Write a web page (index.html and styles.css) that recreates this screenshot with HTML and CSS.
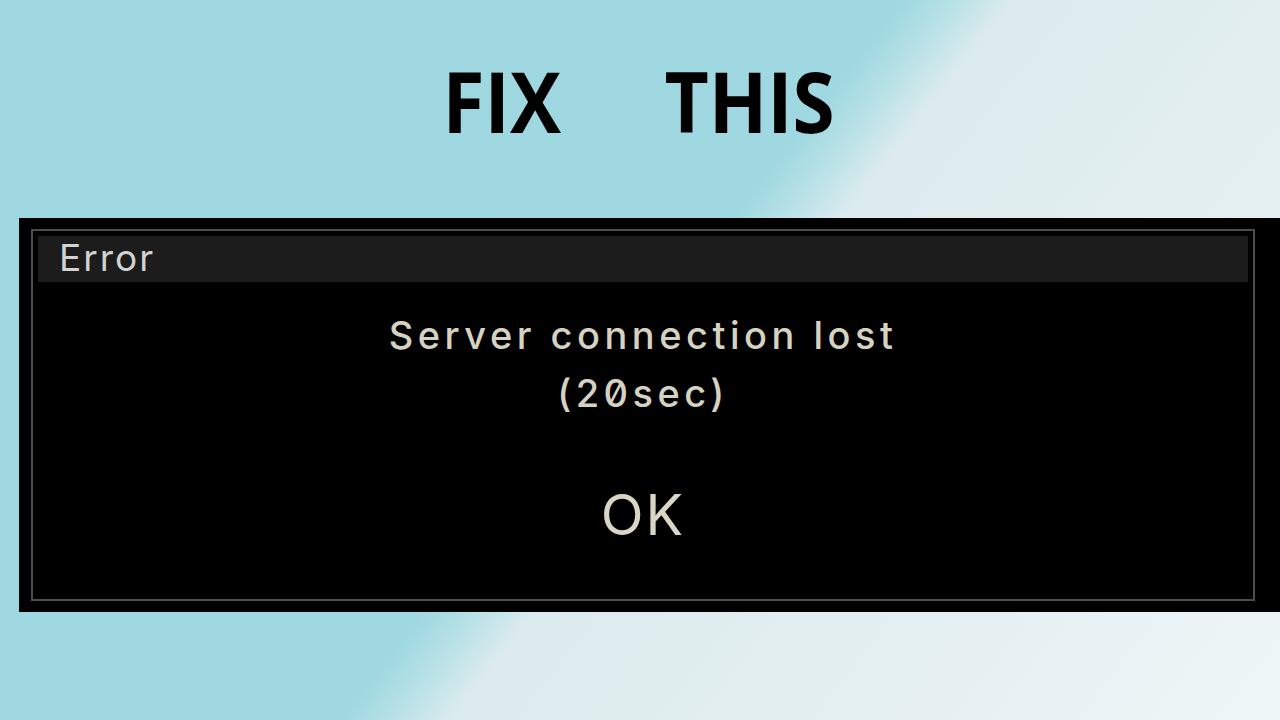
FILE: index.html
```html
<!DOCTYPE html>
<html lang="en">
<head>
    <meta charset="UTF-8">
    <meta name="viewport" content="width=device-width, initial-scale=1.0">
    <title>Fix This</title>
    <link rel="stylesheet" href="styles.css">
</head>
<body>

<header class="headline">
    <span>FIX</span>
    <span>THIS</span>
</header>

<div class="dialog">
    <div class="dialog-frame">
        <div class="dialog-title">Error</div>
        <div class="dialog-body">
            <p class="message">Server connection lost<br>(20sec)</p>
            <button class="ok" type="button">OK</button>
        </div>
    </div>
</div>

</body>
</html>
```

FILE: styles.css
```css
body {
    margin: 0;
    width: 1280px;
    height: 720px;
    overflow: hidden;
    background: linear-gradient(128deg, #9ed7df 0%, #9fd8e0 49%, #b9e2e7 52%, #dcebee 55%, #e2eef0 70%, #eef5f7 100%);
    font-family: "Open Sans", Arial, sans-serif;
}
.headline {
    height: 218px;
    box-sizing: border-box;
    padding-top: 58px;
    display: flex;
    justify-content: center;
    gap: 88px;
    font-size: 85px;
    font-weight: 700;
    line-height: 1;
    color: #000;
}
/* narrower bold caps */
.headline span {
    display: inline-block;
    transform: scaleX(0.9);
}
.dialog {
    margin-left: 19px;
    height: 394px;
    box-sizing: border-box;
    padding: 11px 25px 11px 12px;
    background-color: #000;
}
.dialog-frame {
    height: 100%;
    box-sizing: border-box;
    border: 2px solid #4d4d4d;
    padding: 5px;
    display: flex;
    flex-direction: column;
    font-family: Inter, "DejaVu Sans", sans-serif;
    font-variant-numeric: slashed-zero;
}
.dialog-title {
    height: 46px;
    padding-left: 21px;
    background-color: #1b1c1b;
    color: #d2d2d2;
    font-size: 37px;
    line-height: 44px;
    letter-spacing: 2px;
}
.dialog-body {
    display: flex;
    flex-direction: column;
    align-items: center;
}
.message {
    margin: 24px 0 0;
    text-align: center;
    font-size: 38px;
    font-weight: 500;
    line-height: 58px;
    letter-spacing: 4.5px;
    color: #d5d2c2;
}
.ok {
    margin-top: 65px;
    padding: 0;
    border: none;
    background: none;
    font-family: inherit;
    font-size: 56px;
    line-height: 1;
    letter-spacing: 2px;
    color: #d9d6c6;
    cursor: pointer;
}
```
